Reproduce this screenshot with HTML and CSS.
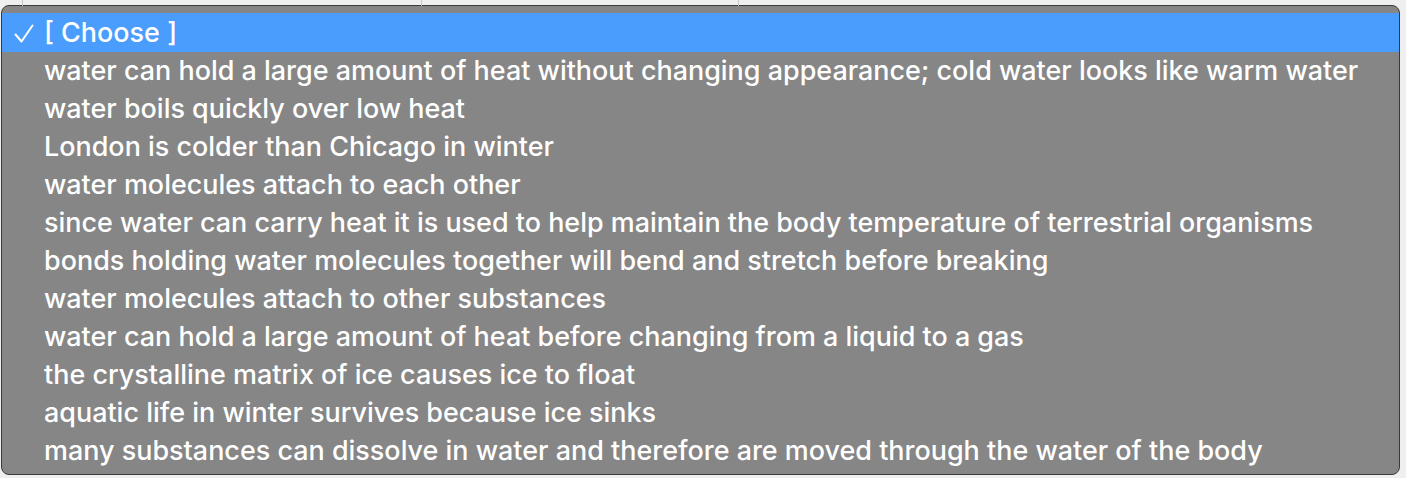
FILE: index.html
```html
<!DOCTYPE html>
<html>
<head>
<meta charset="utf-8">
<link rel="stylesheet" href="styles.css">
</head>
<body>
<div class="backdrop">
  <div class="cols"><span class="col c1"></span><span class="col c2"></span><span class="col c3"></span></div>
  <ul class="menu">
    <li class="item selected"><span class="check"><svg width="20" height="20" viewBox="0 0 20 20"><path d="M1.5 10.5 L7.5 17.5 L18.5 1.5" fill="none" stroke="#fff" stroke-width="2" stroke-linecap="round" stroke-linejoin="round"/></svg></span><span class="label">[ Choose ]</span></li>
    <li class="item"><span class="check"></span><span class="label">water can hold a large amount of heat without changing appearance; cold water looks like warm water</span></li>
    <li class="item"><span class="check"></span><span class="label">water boils quickly over low heat</span></li>
    <li class="item"><span class="check"></span><span class="label">London is colder than Chicago in winter</span></li>
    <li class="item"><span class="check"></span><span class="label">water molecules attach to each other</span></li>
    <li class="item"><span class="check"></span><span class="label">since water can carry heat it is used to help maintain the body temperature of terrestrial organisms</span></li>
    <li class="item"><span class="check"></span><span class="label">bonds holding water molecules together will bend and stretch before breaking</span></li>
    <li class="item"><span class="check"></span><span class="label">water molecules attach to other substances</span></li>
    <li class="item"><span class="check"></span><span class="label">water can hold a large amount of heat before changing from a liquid to a gas</span></li>
    <li class="item"><span class="check"></span><span class="label">the crystalline matrix of ice causes ice to float</span></li>
    <li class="item"><span class="check"></span><span class="label">aquatic life in winter survives because ice sinks</span></li>
    <li class="item"><span class="check"></span><span class="label">many substances can dissolve in water and therefore are moved through the water of the body</span></li>
  </ul>
</div>
</body>
</html>
```
FILE: styles.css
```css
html, body {
  margin: 0;
  padding: 0;
  background: #efefef;
  width: 1406px;
  height: 478px;
  overflow: hidden;
}
.backdrop {
  position: relative;
  width: 1406px;
  height: 478px;
  padding-top: 5px;
  box-sizing: border-box;
  padding-left: 1px;
}
.cols {
  position: absolute;
  top: 0;
  left: 0;
  width: 100%;
  height: 6px;
}
.col {
  position: absolute;
  top: 0;
  width: 1px;
  height: 6px;
  background: #c4c4c4;
}
.c1 { left: 22px; }
.c2 { left: 421px; }
.c3 { left: 738px; }
.menu {
  list-style: none;
  margin: 0;
  padding: 7px 0 7px 0;
  width: 1399px;
  height: 470px;
  box-sizing: border-box;
  background: #868686;
  border: 1px solid #3a3a3a;
  border-radius: 8px;
  font-family: "Inter", "Liberation Sans", sans-serif;
  font-size: 26.95px;
  font-weight: 500;
  color: #ffffff;
}
.item {
  display: flex;
  align-items: center;
  height: 38px;
  line-height: 38px;
  white-space: nowrap;
}
.item.selected {
  background: #4a9cfd;
  height: 39px;
}
.check {
  width: 42px;
  height: 100%;
  box-sizing: border-box;
  padding-left: 12px;
  padding-top: 11px;
  flex: none;
  display: flex;
  align-items: flex-start;
}
.label {
  flex: none;
}
```
